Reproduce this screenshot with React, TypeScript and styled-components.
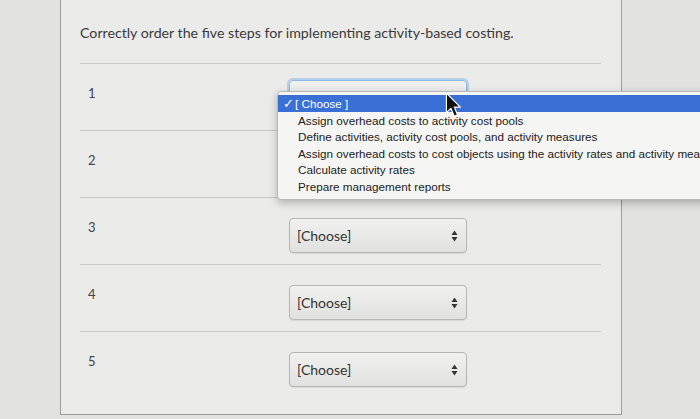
import React from 'react';
import styled, { createGlobalStyle } from 'styled-components';

const GlobalStyle = createGlobalStyle`
  html, body {
    margin: 0;
    padding: 0;
  }
  body {
    background: #e2e2e0;
    color: #3a3a3a;
    font-family: Lato, 'Open Sans', sans-serif;
    overflow: hidden;
  }
`;

const Page = styled.div`
  box-sizing: border-box;
  height: 419px;
  overflow: hidden;
  padding-left: 60px;
  position: relative;
  width: 700px;
`;

const Card = styled.div`
  background: #ebebe9;
  border: 1px solid #9c9c9a;
  border-top: none;
  box-sizing: border-box;
  height: 415px;
  padding: 23px 20px 0 19px;
  width: 562px;
`;

const Question = styled.p`
  border-bottom: 1px solid #c8c8c6;
  font-size: 14.2px;
  line-height: 20px;
  margin: 0;
  padding-bottom: 20px;
`;

const Row = styled.div<{ $last?: boolean }>`
  border-bottom: ${(p) => (p.$last ? 'none' : '1px solid #c8c8c6')};
  box-sizing: border-box;
  display: grid;
  grid-template-columns: 209px 178px;
  height: 67px;
`;

const Num = styled.div`
  color: #444;
  font-size: 13px;
  line-height: 16px;
  padding: 21px 0 0 8px;
`;

const Select = styled.div<{ $focused?: boolean }>`
  align-items: center;
  background: linear-gradient(#f1f1ef, #e1e1df);
  border: 1px solid ${(p) => (p.$focused ? '#8db6e6' : '#b6b6b4')};
  border-radius: 4px;
  box-shadow: ${(p) =>
    p.$focused ? '0 0 0 2px rgba(120, 170, 230, 0.45)' : '0 1px 1px rgba(0, 0, 0, 0.08)'};
  box-sizing: border-box;
  color: #333;
  display: flex;
  font-size: 14px;
  height: 35px;
  justify-content: space-between;
  margin-top: ${(p) => (p.$focused ? '16px' : '20px')};
  padding: 0 8px 0 7px;
`;

const Menu = styled.ul`
  background: #f5f5f4;
  border: 1px solid #b9b9b9;
  border-radius: 4px;
  box-shadow: 0 3px 8px rgba(0, 0, 0, 0.25);
  font-family: 'Liberation Sans', Arial, sans-serif;
  font-size: 11.7px;
  left: 277px;
  list-style: none;
  margin: 0;
  padding: 3px 0 4px;
  position: absolute;
  top: 91px;
  width: 440px;
`;

const MenuItem = styled.li<{ $active?: boolean }>`
  background: ${(p) => (p.$active ? '#3a6fd6' : 'transparent')};
  color: ${(p) => (p.$active ? '#fff' : '#222')};
  height: 17px;
  line-height: 17px;
  margin-bottom: -0.4px;
  padding-left: ${(p) => (p.$active ? '5px' : '20px')};
  white-space: nowrap;
`;

const Check = styled.span`
  display: inline-block;
  font-family: 'DejaVu Sans', sans-serif;
  font-size: 13px;
  font-weight: bold;
  width: 12px;
`;

const Pointer = styled.svg`
  left: 445px;
  position: absolute;
  top: 92px;
`;

const Arrows = () => (
  <svg width="7" height="12" viewBox="0 0 7 12">
    <path d="M3.5 0.5 L6.5 5 L0.5 5 Z" fill="#333" />
    <path d="M3.5 11.5 L6.5 7 L0.5 7 Z" fill="#333" />
  </svg>
);

const options = [
  'Assign overhead costs to activity cost pools',
  'Define activities, activity cost pools, and activity measures',
  'Assign overhead costs to cost objects using the activity rates and activity measures',
  'Calculate activity rates',
  'Prepare management reports',
];

export default function App() {
  return (
    <Page>
      <GlobalStyle />
      <Card>
        <Question>Correctly order the five steps for implementing activity-based costing.</Question>
        {[1, 2, 3, 4, 5].map((n) => (
          <Row key={n} $last={n === 5}>
            <Num>{n}</Num>
            <div>
              <Select $focused={n === 1}>
                [Choose]
                <Arrows />
              </Select>
            </div>
          </Row>
        ))}
      </Card>
      <Menu>
        <MenuItem $active>
          <Check>✓</Check>[ Choose ]
        </MenuItem>
        {options.map((o) => (
          <MenuItem key={o}>{o}</MenuItem>
        ))}
      </Menu>
      <Pointer width="17" height="26" viewBox="0 0 14 22">
        <path
          d="M1 1 L1 17.5 L4.8 13.8 L7.6 20.5 L10.4 19.3 L7.7 12.8 L12.8 12.8 Z"
          fill="#111"
          stroke="#fff"
          strokeWidth="1"
          strokeLinejoin="round"
        />
      </Pointer>
    </Page>
  );
}
